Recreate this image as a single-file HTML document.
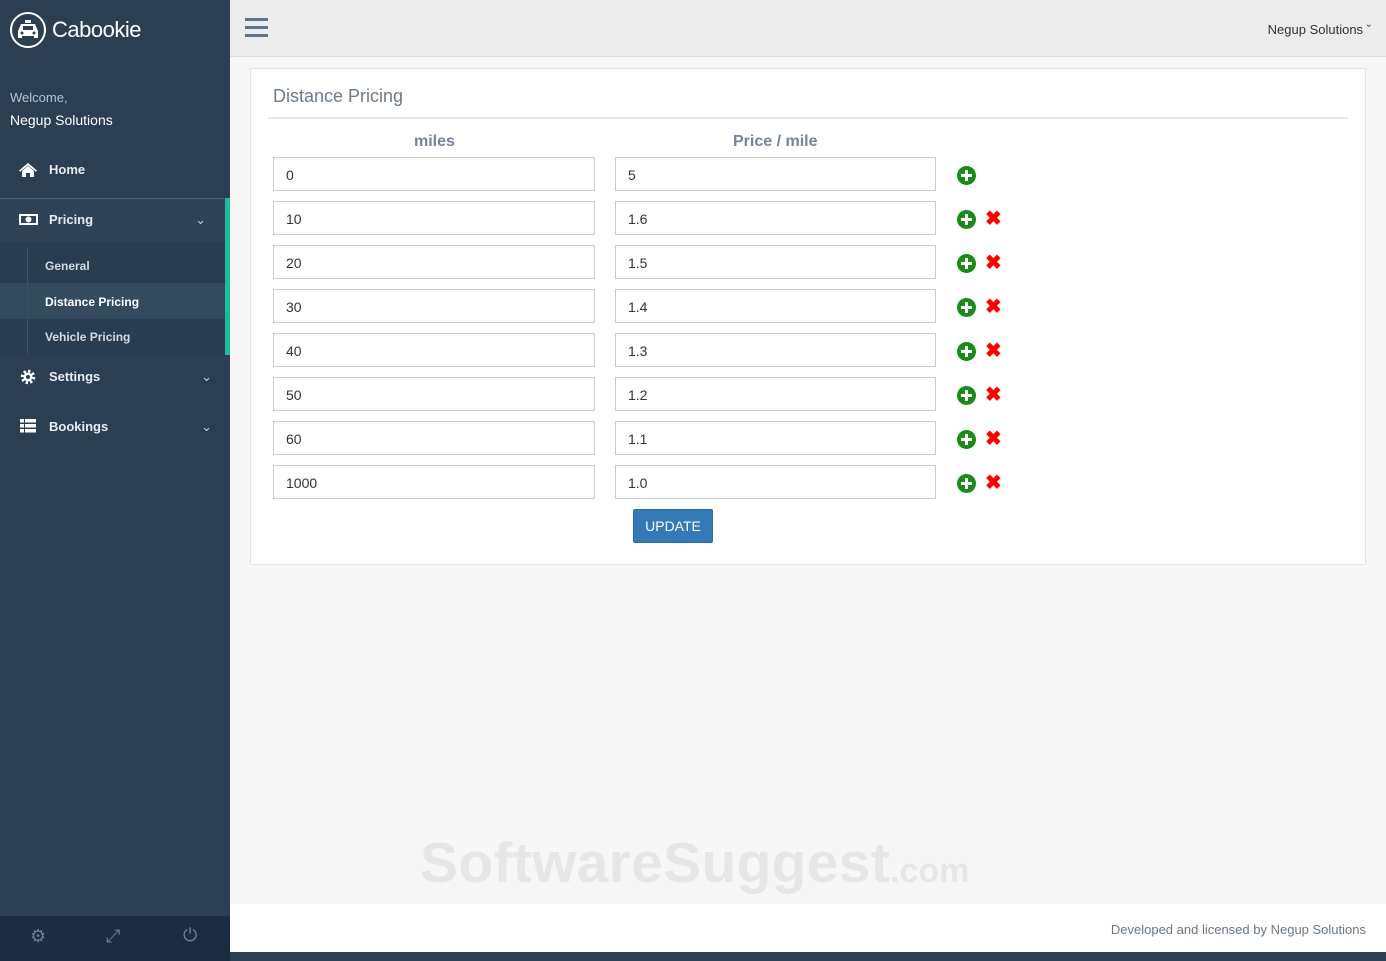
<!DOCTYPE html>
<html><head><meta charset="utf-8"><style>
*{box-sizing:border-box;margin:0;padding:0}
body{width:1386px;height:961px;overflow:hidden;font-family:"Liberation Sans",sans-serif;background:#f6f6f6;position:relative}
.sb{position:absolute;left:0;top:0;width:230px;height:961px;background:#2b3e52;color:#fff}
.logo{position:absolute;left:10px;top:12px;display:flex;align-items:center}
.logo .c{width:36px;height:36px;border:2px solid #fff;border-radius:50%;display:flex;align-items:center;justify-content:center}
.logo span{font-size:22px;margin-left:6px;letter-spacing:-0.5px}
.wel{position:absolute;left:10px;top:90px;font-size:13px;color:#b8c2cc}
.name{position:absolute;left:10px;top:112px;font-size:14px;color:#fff}
.it{position:absolute;left:0;width:230px;font-size:13px;font-weight:bold;color:#e8ecf0}
.it svg{position:absolute;left:19px}
.it .t{position:absolute;left:49px}
.it .ch{position:absolute;right:22px;color:#c8d0d8;font-weight:normal}
.sub{position:absolute;left:45px;font-size:12px;font-weight:bold;color:#d4dae0}
.top{position:absolute;left:230px;top:0;right:0;height:57px;background:#ececec;border-bottom:1px solid #dcdcdc}
.card{position:absolute;left:250px;top:68px;width:1116px;height:497px;background:#fff;border:1px solid #e4e4e4}
.card h2{position:absolute;left:22px;top:17px;font-size:18px;font-weight:normal;color:#6e7a88}
.card hr{position:absolute;left:17px;right:17px;top:48px;border:0;border-top:2px solid #e6e8eb}
.hd{position:absolute;top:64px;font-size:16px;font-weight:bold;color:#76849a}
.in{position:absolute;width:322px;height:34px;border:1px solid #ccc;font-size:14px;color:#333;padding:9px 12px}
.plus{position:absolute;width:19px;height:19px;border-radius:50%;background:#1a8a1a}
.plus:before{content:"";position:absolute;left:4px;top:8px;width:11px;height:3px;background:#fff}
.plus:after{content:"";position:absolute;left:8px;top:4px;width:3px;height:11px;background:#fff}
.x{position:absolute;color:#f00;font-size:20px;font-weight:bold;line-height:19px}
.btn{position:absolute;left:382px;top:440px;width:80px;height:34px;background:#337ab7;border:1px solid #2e6da4;border-radius:2px;color:#fff;font-size:14px;text-align:center;line-height:32px}
.foot{position:absolute;left:230px;top:904px;right:0;height:48px;background:#fff;font-size:13px;color:#6a7686;text-align:right;padding:18px 20px 0 0}
.strip{position:absolute;left:230px;top:952px;right:0;height:9px;background:#2b3e52}
.wm{position:absolute;left:420px;top:830px;font-size:57px;font-weight:bold;color:#e6e6e6;letter-spacing:0.3px}
.wm small{font-size:34px;letter-spacing:0}
</style></head><body>
<div class="sb">
 <div class="logo"><div class="c"><svg width="22" height="20" viewBox="0 0 22 20"><rect x="8" y="0" width="6" height="3" fill="#fff"/><path d="M4 4h14l3 7v7h-4v-2H5v2H1v-7z" fill="#fff"/><rect x="6" y="6" width="10" height="4" fill="#2b3e52"/><circle cx="5" cy="13" r="1.5" fill="#2b3e52"/><circle cx="17" cy="13" r="1.5" fill="#2b3e52"/></svg></div><span>Cabookie</span></div>
 <div class="wel">Welcome,</div><div class="name">Negup Solutions</div>
 <div class="it" style="top:162px"><svg width="18" height="15" viewBox="0 0 18 15" style="top:0"><path d="M9 1L0 8.5l1.2 1.3L9 3.5l7.8 6.3L18 8.5z" fill="#fff"/><path d="M3 9l6-5 6 5v6h-4v-4H7v4H3z" fill="#fff"/></svg><span class="t">Home</span></div>
 <div style="position:absolute;left:0;top:198px;width:230px;height:157px;background:#2f4257;border-top:1px solid #4a5a6c"></div>
 <div style="position:absolute;left:225px;top:198px;width:5px;height:157px;background:#1abc9c"></div>
 <div style="position:absolute;left:0;top:242px;width:225px;height:113px;background:#2a3c50"></div>
 <div style="position:absolute;left:0;top:283px;width:225px;height:36px;background:#344a5f"></div>
 <div style="position:absolute;left:27px;top:248px;width:1px;height:106px;background:#3e5064"></div>
 <div class="it" style="top:212px"><svg width="19" height="11" viewBox="0 0 19 11" style="top:2px"><rect x="0" y="0" width="19" height="11" fill="#fff"/><rect x="2" y="2" width="15" height="7" fill="#2f4257"/><ellipse cx="9.5" cy="5.5" rx="3" ry="3" fill="#fff"/></svg><span class="t">Pricing</span><span class="ch" style="right:24px">&#8964;</span></div>
 <div class="sub" style="top:259px">General</div>
 <div class="sub" style="top:295px;color:#fff">Distance Pricing</div>
 <div class="sub" style="top:330px">Vehicle Pricing</div>
 <div class="it" style="top:369px"><svg width="16" height="16" viewBox="0 0 16 16" style="top:0;left:20px"><circle cx="8" cy="8" r="5.5" fill="none" stroke="#fff" stroke-width="3.5" stroke-dasharray="2.2 2.1"/><circle cx="8" cy="8" r="4.5" fill="#fff"/><circle cx="8" cy="8" r="2" fill="#2b3e52"/></svg><span class="t">Settings</span><span class="ch" style="right:18px">&#8964;</span></div>
 <div class="it" style="top:419px"><svg width="16" height="14" viewBox="0 0 16 14" style="top:0;left:20px"><g fill="#fff"><rect x="0" y="0" width="4" height="3.5"/><rect x="5" y="0" width="11" height="3.5"/><rect x="0" y="5" width="4" height="3.5"/><rect x="5" y="5" width="11" height="3.5"/><rect x="0" y="10" width="4" height="3.5"/><rect x="5" y="10" width="11" height="3.5"/></g></svg><span class="t">Bookings</span><span class="ch" style="right:18px">&#8964;</span></div>
 <div style="position:absolute;left:0;top:916px;width:230px;height:45px;background:#1c2d41;color:#6f7e8e;font-size:18px">
  <span style="position:absolute;left:30px;top:10px">&#9881;</span>
  <span style="position:absolute;left:106px;top:10px">&#10530;</span>
  <span style="position:absolute;left:183px;top:9px">&#9211;</span>
 </div>
</div>
<div class="top">
 <div style="position:absolute;left:15px;top:18px;width:23px;height:3px;background:#5a7590;box-shadow:0 8px 0 #5a7590,0 16px 0 #5a7590"></div>
 <div style="position:absolute;right:15px;top:22px;font-size:13px;color:#333">Negup Solutions &#711;</div>
</div>
<div class="card">
 <h2>Distance Pricing</h2><hr>
 <div class="hd" style="left:163px">miles</div>
 <div class="hd" style="left:482px">Price / mile</div>
 <div class="in" style="left:22px;top:88px">0</div><div class="in" style="left:364px;top:88px;width:321px">5</div><div class="plus" style="left:706px;top:97px"></div>
 <div class="in" style="left:22px;top:132px">10</div><div class="in" style="left:364px;top:132px;width:321px">1.6</div><div class="plus" style="left:706px;top:141px"></div><div class="x" style="left:734px;top:141px">&#10006;</div>
 <div class="in" style="left:22px;top:176px">20</div><div class="in" style="left:364px;top:176px;width:321px">1.5</div><div class="plus" style="left:706px;top:185px"></div><div class="x" style="left:734px;top:185px">&#10006;</div>
 <div class="in" style="left:22px;top:220px">30</div><div class="in" style="left:364px;top:220px;width:321px">1.4</div><div class="plus" style="left:706px;top:229px"></div><div class="x" style="left:734px;top:229px">&#10006;</div>
 <div class="in" style="left:22px;top:264px">40</div><div class="in" style="left:364px;top:264px;width:321px">1.3</div><div class="plus" style="left:706px;top:273px"></div><div class="x" style="left:734px;top:273px">&#10006;</div>
 <div class="in" style="left:22px;top:308px">50</div><div class="in" style="left:364px;top:308px;width:321px">1.2</div><div class="plus" style="left:706px;top:317px"></div><div class="x" style="left:734px;top:317px">&#10006;</div>
 <div class="in" style="left:22px;top:352px">60</div><div class="in" style="left:364px;top:352px;width:321px">1.1</div><div class="plus" style="left:706px;top:361px"></div><div class="x" style="left:734px;top:361px">&#10006;</div>
 <div class="in" style="left:22px;top:396px">1000</div><div class="in" style="left:364px;top:396px;width:321px">1.0</div><div class="plus" style="left:706px;top:405px"></div><div class="x" style="left:734px;top:405px">&#10006;</div>
 <div class="btn">UPDATE</div>
</div>
<div class="wm">SoftwareSuggest<small>.com</small></div>
<div class="foot">Developed and licensed by Negup Solutions</div>
<div class="strip"></div>
</body></html>
